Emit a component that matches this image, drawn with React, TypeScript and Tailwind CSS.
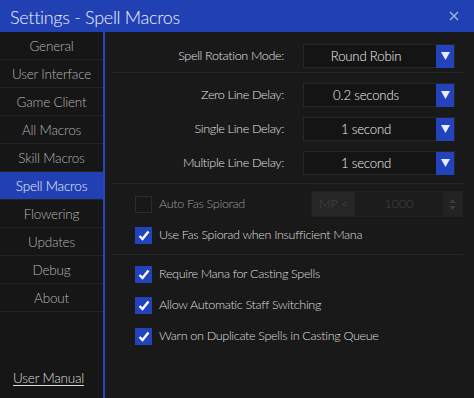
import React from 'react';

const FONT = { fontFamily: 'Lato, "Open Sans", Arial, sans-serif' };

const NAV = [
  'General',
  'User Interface',
  'Game Client',
  'All Macros',
  'Skill Macros',
  'Spell Macros',
  'Flowering',
  'Updates',
  'Debug',
  'About',
];

function Caret() {
  return (
    <svg width="9" height="8" viewBox="0 0 9 8">
      <polygon points="0,0 9,0 4.5,8" fill="#e6ebff" />
    </svg>
  );
}

function Dropdown({ label, value }: { label: string; value: string }) {
  return (
    <div className="flex h-6 items-center">
      <div className="w-[191px] pr-[19px] pt-[1px] text-right text-[12.6px] tracking-[-0.35px] text-[#e0e0e0]">
        {label}
      </div>
      <div className="flex h-6 w-[152px] items-center border border-[#262626] bg-[#141414]">
        <span className="flex-1 pr-[8px] pt-[1px] text-center text-[13.2px] tracking-[-0.2px] text-[#f2f2f2]">
          {value}
        </span>
        <div className="flex h-[23px] w-[18px] items-center justify-center bg-[#2343bd]">
          <Caret />
        </div>
      </div>
    </div>
  );
}

function Checkbox({ checked, label }: { checked: boolean; label: string }) {
  return (
    <div className="flex h-[17px] items-center pl-[23px]">
      {checked ? (
        <div className="flex h-[17px] w-[17px] items-center justify-center bg-[#2343bd]">
          <svg width="12" height="11" viewBox="0 0 12 11">
            <polyline points="1.5,6 4.5,9 10.5,1.5" fill="none" stroke="#fff" strokeWidth="2.4" />
          </svg>
        </div>
      ) : (
        <div className="h-[17px] w-[17px] border border-[#2c2c2c] bg-[#181818]" />
      )}
      <span
        className={`ml-[7px] text-[12.6px] tracking-[-0.35px] ${
          checked ? 'text-[#dedede]' : 'text-[#9a9a9a]'
        }`}
      >
        {label}
      </span>
    </div>
  );
}

export default function App() {
  return (
    <div className="flex h-[398px] w-[474px] flex-col overflow-hidden bg-[#191919] font-light" style={FONT}>
      {/* title bar */}
      <div className="flex h-8 shrink-0 items-center justify-between bg-[#2140b4] pl-[10px] pr-[15px]">
        <span className="pt-[2px] text-[18px] leading-none tracking-[-0.3px] text-[#eef1ff]">
          Settings - Spell Macros
        </span>
        <svg width="10" height="10" viewBox="0 0 10 10">
          <path d="M1 1 L9 9 M9 1 L1 9" stroke="#a9b7e6" strokeWidth="1.3" />
        </svg>
      </div>

      <div className="flex flex-1">
        {/* sidebar */}
        <div className="flex w-[105px] flex-col border-r-2 border-[#2a45b8] bg-[#161616]">
          {NAV.map((item) => (
            <div
              key={item}
              className={`flex h-7 items-center justify-center border-b border-[#242424] pt-[2px] text-[13.5px] tracking-[-0.2px] ${
                item === 'Spell Macros' ? 'bg-[#2140b4] text-[#eef1ff]' : 'text-[#b4b4b4]'
              }`}
            >
              {item}
            </div>
          ))}
          <div className="flex-1" />
          <div className="pb-[10px] pl-[13px] text-[13.5px] tracking-[-0.2px] text-[#dcdcdc] underline underline-offset-2">
            User Manual
          </div>
        </div>

        {/* main */}
        <div className="flex-1 pl-[7px] pr-[11px]">
          <div className="border-b border-[#262626] pb-[4px] pt-[12px]">
            <Dropdown label="Spell Rotation Mode:" value="Round Robin" />
          </div>

          <div className="flex flex-col gap-[10px] border-b border-[#262626] pb-[8px] pt-[10px]">
            <Dropdown label="Zero Line Delay:" value="0.2 seconds" />
            <Dropdown label="Single Line Delay:" value="1 second" />
            <Dropdown label="Multiple Line Delay:" value="1 second" />
          </div>

          <div className="border-b border-[#262626] pb-[10px] pt-[7px]">
            <div className="flex h-[26px] items-center">
              <div className="flex-1">
                <Checkbox checked={false} label="Auto Fas Spiorad" />
              </div>
              <div className="flex h-[26px] w-[152px] items-center border border-[#202020] bg-[#1c1c1c]">
                <div className="flex h-full w-[43px] items-center justify-center bg-[#262626] text-[12.6px] text-[#474747]">
                  MP &lt;
                </div>
                <span className="flex-1 text-center text-[12.6px] text-[#444]">1000</span>
                <div className="flex h-full w-[19px] flex-col items-center justify-center gap-[3px] bg-[#222]">
                  <svg width="7" height="4" viewBox="0 0 7 4">
                    <polygon points="0,4 7,4 3.5,0" fill="#3a3a3a" />
                  </svg>
                  <svg width="7" height="4" viewBox="0 0 7 4">
                    <polygon points="0,0 7,0 3.5,4" fill="#3a3a3a" />
                  </svg>
                </div>
              </div>
            </div>
            <div className="mt-[10px]">
              <Checkbox checked label="Use Fas Spiorad when Insufficient Mana" />
            </div>
          </div>

          <div className="flex flex-col gap-[14px] pt-[11px]">
            <Checkbox checked label="Require Mana for Casting Spells" />
            <Checkbox checked label="Allow Automatic Staff Switching" />
            <Checkbox checked label="Warn on Duplicate Spells in Casting Queue" />
          </div>
        </div>
      </div>
    </div>
  );
}
